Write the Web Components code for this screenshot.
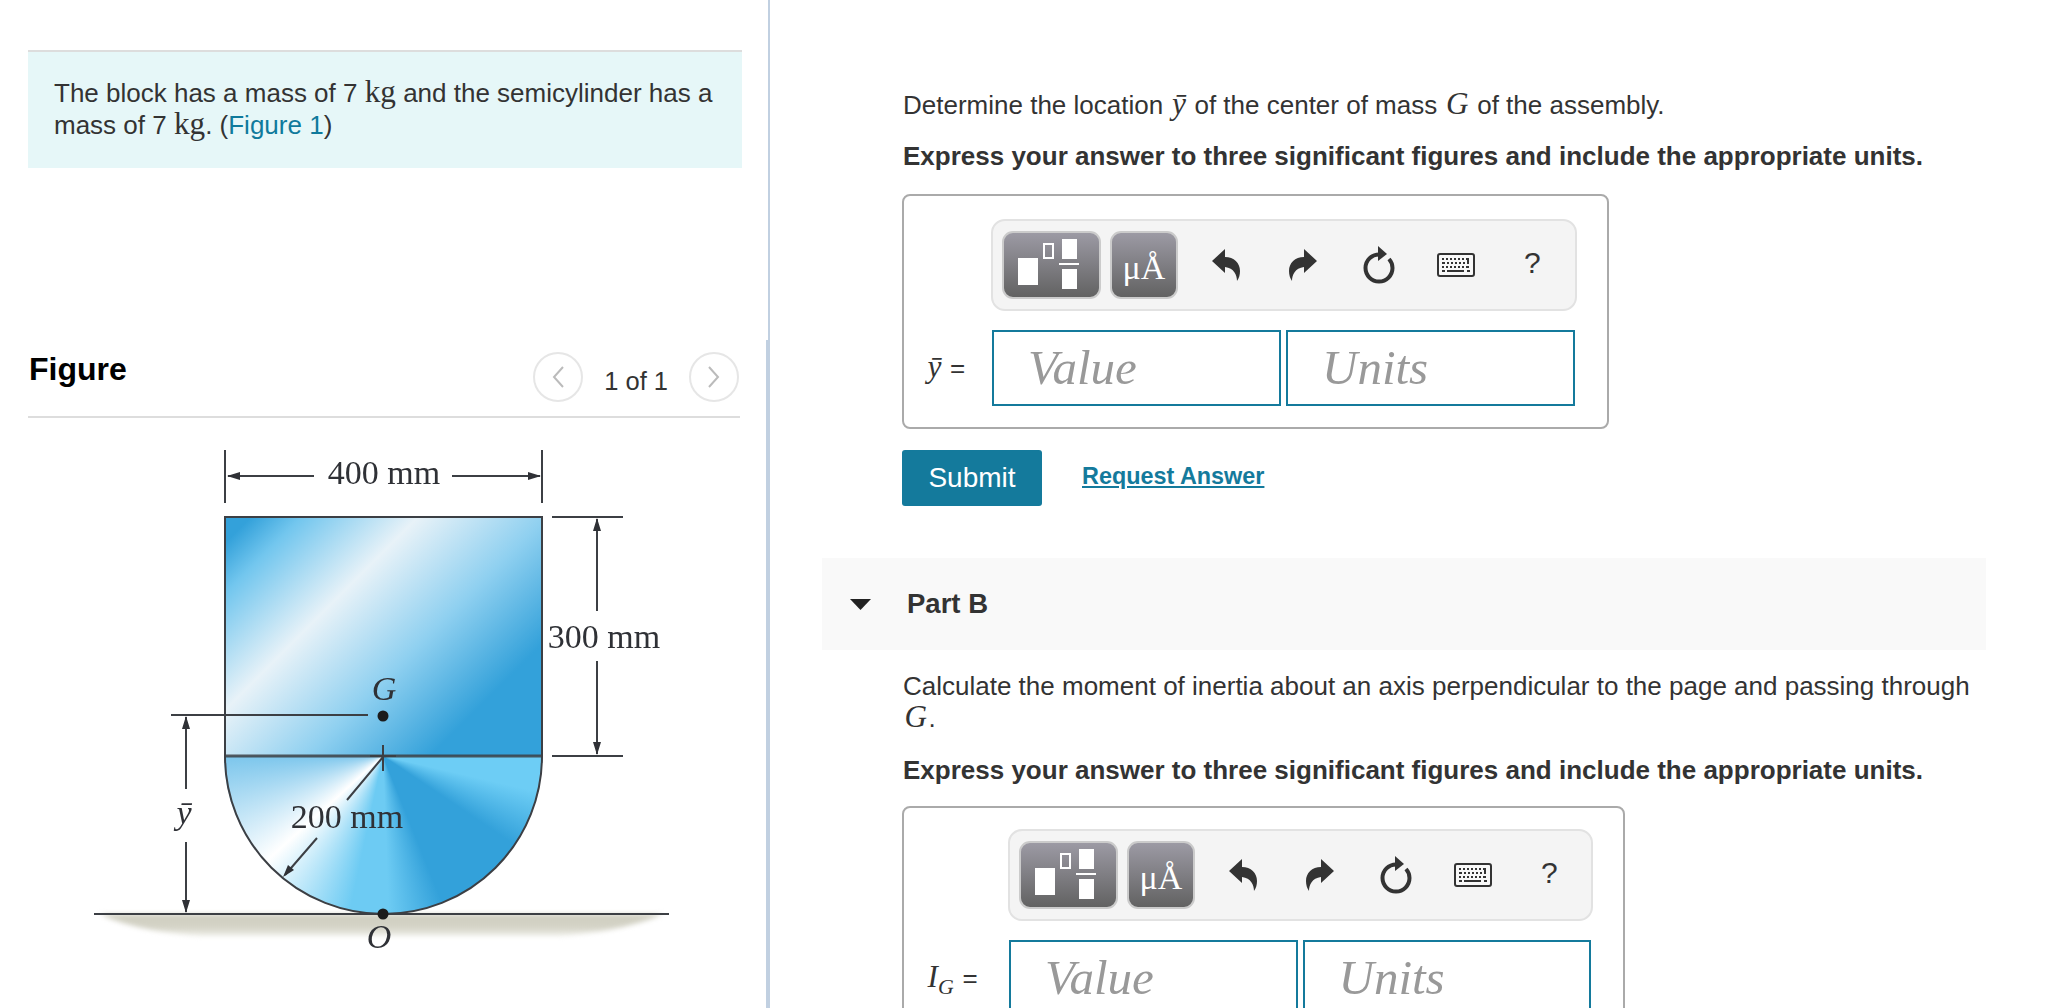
<!DOCTYPE html>
<html lang="en">
<head>
<meta charset="utf-8">
<title>Part A</title>
<style>
  html, body { margin: 0; height: 100%; overflow: hidden; background: #fff; }
  body { font-family: "Liberation Sans", Arial, sans-serif; color: #333; }
</style>
</head>
<body>
<problem-page>
  <div slot="left">
    <info-box>The block has a mass of 7 <math-text upright>kg</math-text> and the semicylinder has a<br>mass of 7 <math-text upright>kg</math-text>. (<a-link>Figure 1</a-link>)</info-box>
    <figure-head></figure-head>
    <block-figure></block-figure>
  </div>
  <div slot="right">
    <prompt-text style="margin-top:89px">Determine the location <math-text>ȳ</math-text> of the center of mass <math-text>G</math-text> of the assembly.</prompt-text>
    <prompt-text strong style="margin-top:19px">Express your answer to three significant figures and include the appropriate units.</prompt-text>
    <answer-box style="margin-top:22px;width:707px;--label-w:66px"><math-text>ȳ</math-text> =</answer-box>
    <submit-row></submit-row>
    <part-header>Part B</part-header>
    <prompt-text style="margin-top:20px">Calculate the moment of inertia about an axis perpendicular to the page and passing through <math-text>G</math-text>.</prompt-text>
    <prompt-text strong style="margin-top:20px">Express your answer to three significant figures and include the appropriate units.</prompt-text>
    <answer-box style="margin-top:20px;width:723px;--label-w:83px;--pad-top:21px"><math-text>I<sub style="font-size:.7em">G</sub></math-text> =</answer-box>
  </div>
</problem-page>

<script>
class ProblemPage extends HTMLElement {
    constructor() {
        super();
        const shadow = this.attachShadow({ mode: 'open' });
        shadow.innerHTML = `
            <style>
                :host { display: flex; height: 100vh; overflow: hidden; }
                .left {
                    position: relative;
                    box-sizing: border-box;
                    width: 770px;
                    flex: none;
                    border-right: 2px solid #c1d0e1;
                    padding: 50px 0 0 28px;
                }
                /* thicker part of the splitter */
                .left::after {
                    content: '';
                    position: absolute;
                    top: 340px;
                    bottom: 0;
                    right: 0;
                    width: 2px;
                    background: #c1d0e1;
                }
                .right { flex: 1; min-width: 0; padding: 0 82px 0 52px; }
            </style>
            <div class="left"><slot name="left"></slot></div>
            <div class="right"><slot name="right"></slot></div>
        `;
    }
}

class MathText extends HTMLElement {
    constructor() {
        super();
        const shadow = this.attachShadow({ mode: 'open' });
        // no whitespace around the slot, it would show up inside the sentence
        shadow.innerHTML = `<style>
                :host {
                    display: inline;
                    font-family: "Liberation Serif", serif;
                    font-size: 1.2em;
                    font-style: italic;
                    line-height: 0;
                    margin: 0 1.500px;
                }
                :host([upright]) { font-style: normal; margin: 0; }
            </style><slot></slot>`;
    }
}

class ALink extends HTMLElement {
    constructor() {
        super();
        const shadow = this.attachShadow({ mode: 'open' });
        shadow.innerHTML = `<style>:host { display: inline; color: #0f7a9c; cursor: pointer; }</style><slot></slot>`;
    }
}

class InfoBox extends HTMLElement {
    constructor() {
        super();
        const shadow = this.attachShadow({ mode: 'open' });
        shadow.innerHTML = `
            <style>
                :host {
                    display: block;
                    box-sizing: border-box;
                    width: 714px;
                    height: 118px;
                    background: #e6f7f8;
                    border-top: 2px solid #ddd;
                    padding: 25px 26px 0;
                    font-size: 26px;
                    line-height: 32px;
                    color: #333;
                }
            </style>
            <slot></slot>
        `;
    }
}

class FigureHead extends HTMLElement {
    constructor() {
        super();
        const shadow = this.attachShadow({ mode: 'open' });
        shadow.innerHTML = `
            <style>
                :host {
                    display: flex;
                    justify-content: space-between;
                    box-sizing: border-box;
                    width: 712px;
                    height: 66px;
                    margin-top: 184px;
                    border-bottom: 2px solid #ddd;
                }
                h2 { margin: 0 0 0 1px; font-size: 32px; line-height: 34px; font-weight: 700; color: #000; }
                .pager { display: flex; align-items: flex-start; gap: 21px; margin-right: 1px; }
                .count { font-size: 25.500px; line-height: 32px; margin-top: 13px; color: #333; }
                .nav {
                    box-sizing: border-box;
                    width: 50px;
                    height: 50px;
                    border: 2px solid #e6e6e6;
                    border-radius: 50%;
                    display: flex;
                    align-items: center;
                    justify-content: center;
                }
            </style>
            <h2>Figure</h2>
            <div class="pager">
                <div class="nav"><svg width="14" height="22" viewBox="0 0 14 22"><path d="M12 1 3 11l9 10" fill="none" stroke="#bbb" stroke-width="2"/></svg></div>
                <div class="count">1 of 1</div>
                <div class="nav"><svg width="14" height="22" viewBox="0 0 14 22"><path d="M2 1l9 10-9 10" fill="none" stroke="#bbb" stroke-width="2"/></svg></div>
            </div>
        `;
    }
}

class BlockFigure extends HTMLElement {
    constructor() {
        super();
        const shadow = this.attachShadow({ mode: 'open' });
        // viewBox uses page coordinates, the left pane starts at 28px
        shadow.innerHTML = `
            <style>
                :host { display: block; margin-left: -28px; width: 740px; height: 590px; }
                svg { display: block; filter: blur(.45px); }
                text { font-family: "Liberation Serif", serif; font-size: 34px; fill: #2f3136; }
                .it { font-style: italic; }
                .l { stroke: #3c3f44; stroke-width: 2; fill: none; }
                .floor { filter: blur(2.500px); }
                .conic {
                    width: 100%;
                    height: 100%;
                    background: conic-gradient(from 0deg at 159px 0,
                        #6dcdf5 90deg, #6dcdf5 103deg, #33a1da 124deg, #33a1da 158deg,
                        #6dcbf3 178deg, #6dcbf3 192deg, #fff 228deg, #7cc6ec 270deg);
                }
            </style>
            <svg width="740" height="590" viewBox="0 418 740 590">
                <defs>
                    <linearGradient id="plate" gradientUnits="userSpaceOnUse" x1="224" y1="516" x2="503" y2="795">
                        <stop offset=".05" stop-color="#33a1da"/>
                        <stop offset=".14" stop-color="#72c6ee"/>
                        <stop offset=".35" stop-color="#e8f2f8"/>
                        <stop offset=".58" stop-color="#8fd0f0"/>
                        <stop offset=".8" stop-color="#33a1da"/>
                        <stop offset="1" stop-color="#33a1da"/>
                    </linearGradient>
                    <linearGradient id="floor" x1="0" y1="0" x2="0" y2="1">
                        <stop offset="0" stop-color="#cfcec0"/>
                        <stop offset=".6" stop-color="#d4d3c6"/>
                        <stop offset="1" stop-color="#f0f0ea"/>
                    </linearGradient>
                    <clipPath id="half"><path d="M224 756H542A159 158 0 0 1 224 756Z"/></clipPath>
                </defs>

                <path class="floor" d="M100 914H663C640 924 610 932 560 936H200C150 932 120 924 100 914Z" fill="url(#floor)"/>

                <rect x="225" y="517" width="317" height="239" fill="url(#plate)"/>
                <g clip-path="url(#half)">
                    <foreignObject x="224" y="756" width="318" height="159">
                        <div xmlns="http://www.w3.org/1999/xhtml" class="conic"></div>
                    </foreignObject>
                </g>
                <path class="l" d="M225 756V517H542V756A158.500 158 0 0 1 225 756"/>
                <path d="M224 756H542" stroke="#3c3f44" stroke-width="3" fill="none" opacity=".85"/>

                <path class="l" d="M94 914H669"/>

                <!-- 400 mm -->
                <path class="l" d="M225 450V503M542 450V503M228 476H314M452 476H540"/>
                <path d="M227 476l13-4v8zM541 476l-13-4v8z" fill="#2f3136"/>
                <text x="384" y="484" text-anchor="middle">400 mm</text>

                <!-- 300 mm -->
                <path class="l" d="M552 517H623M552 756H623M597 519V611M597 661V754"/>
                <path d="M597 518l-4 13h8zM597 755l-4-13h8z" fill="#2f3136"/>
                <text x="604" y="648" text-anchor="middle">300 mm</text>

                <!-- y bar -->
                <path class="l" d="M171 715H368M186 717V789M186 842V912"/>
                <path d="M186 716l-4 13h8zM186 913l-4-13h8z" fill="#2f3136"/>
                <text x="184" y="824" text-anchor="middle" class="it">ȳ</text>

                <!-- G, centre lines -->
                <circle cx="383" cy="716" r="5.500" fill="#1c1c1c"/>
                <text x="384" y="700" text-anchor="middle" class="it">G</text>
                <path class="l" d="M383 745V771M370 756H396"/>
                <path class="l" d="M383 757 347 800M317 838 285 875"/>
                <path d="M283 877l5-12 6 5z" fill="#2f3136"/>
                <text x="347" y="828" text-anchor="middle">200 mm</text>

                <!-- O -->
                <circle cx="383" cy="914" r="5.500" fill="#1c1c1c"/>
                <text x="379" y="948" text-anchor="middle" class="it">O</text>
            </svg>
        `;
    }
}

class PromptText extends HTMLElement {
    constructor() {
        super();
        const shadow = this.attachShadow({ mode: 'open' });
        shadow.innerHTML = `
            <style>
                :host {
                    display: block;
                    padding-left: 81px;
                    font-size: 26px;
                    line-height: 32px;
                    color: #333;
                }
                :host([strong]) { font-weight: 700; }
            </style>
            <slot></slot>
        `;
    }
}

class ToolBar extends HTMLElement {
    constructor() {
        super();
        const shadow = this.attachShadow({ mode: 'open' });
        shadow.innerHTML = `
            <style>
                :host {
                    display: flex;
                    align-items: center;
                    box-sizing: border-box;
                    height: 92px;
                    border: 2px solid #e2e2e2;
                    border-radius: 14px;
                    background: #f4f4f4;
                    padding: 0 0 0 9px;
                    margin-left: -1px;
                }
                .btn {
                    box-sizing: border-box;
                    height: 68px;
                    border: 2px solid #cbcbcb;
                    border-radius: 11px;
                    background: linear-gradient(#9c9aa4, #626262);
                    flex: none;
                }
                .tpl { width: 99px; display: block; }
                .unit {
                    width: 68px;
                    margin-left: 9px;
                    color: #fff;
                    font-family: "Liberation Serif", serif;
                    font-size: 34px;
                    line-height: 70px;
                    text-align: center;
                    overflow: hidden;
                }
                .cells { display: flex; margin-left: 10px; }
                .cell {
                    width: 76.500px;
                    height: 68px;
                    display: flex;
                    align-items: center;
                    justify-content: center;
                }
                .help { font-size: 30px; color: #333; margin-top: -2px; }
            </style>
            <div class="btn tpl">
                <svg width="95" height="64" viewBox="0 0 95 64">
                    <rect x="14" y="25" width="20" height="27" fill="#fff"/>
                    <rect x="40" y="11" width="9" height="14" fill="none" stroke="#fff" stroke-width="2"/>
                    <rect x="58" y="6" width="15" height="20" fill="#fff"/>
                    <rect x="55" y="30" width="20" height="2" fill="#fff"/>
                    <rect x="58" y="36" width="15" height="20" fill="#fff"/>
                </svg>
            </div>
            <div class="btn unit">μÅ</div>
            <div class="cells">
                <div class="cell"><svg width="28" height="32" viewBox="0 0 28 32"><path d="M0 12 13 0V8C22 8 28 14 28 22 28 26 27 29 25 32 25 26 22 19 13 18V24Z" fill="#333"/></svg></div>
                <div class="cell"><svg width="28" height="32" viewBox="0 0 28 32"><path d="M28 12 15 0V8C6 8 0 14 0 22 0 26 1 29 3 32 3 26 6 19 15 18V24Z" fill="#333"/></svg></div>
                <div class="cell"><svg width="32" height="38" viewBox="0 0 32 38"><path d="M16 8.500A13.500 13.500 0 1 0 29.500 22 13.500 13.500 0 0 0 26 13" fill="none" stroke="#333" stroke-width="4"/><path d="M15 0 24 8 15 15Z" fill="#333"/></svg></div>
                <div class="cell"><svg width="38" height="24" viewBox="0 0 38 24">
                    <rect x="1" y="1" width="36" height="22" rx="2" fill="#f8f8f8" stroke="#333" stroke-width="2"/>
                    <path d="M5 6h2M9 6h2M13 6h2M17 6h2M21 6h2M25 6h2M29 6h3M5 10h3M10 10h2M14 10h2M18 10h2M22 10h2M26 10h2M31 6v5M5 14h2M9 14h2M13 14h2M17 14h2M21 14h2M25 14h2M29 14h3M5 18h3M10 18h17M30 18h3" stroke="#333" stroke-width="2" fill="none"/>
                </svg></div>
                <div class="cell help">?</div>
            </div>
        `;
    }
}

class InputField extends HTMLElement {
    constructor() {
        super();
        const shadow = this.attachShadow({ mode: 'open' });
        shadow.innerHTML = `
            <style>
                :host {
                    display: block;
                    flex: 1;
                    box-sizing: border-box;
                    height: 76px;
                    border: 2px solid #147a9c;
                    padding-left: 34px;
                    font-family: "Liberation Serif", serif;
                    font-style: italic;
                    font-size: 49px;
                    line-height: 71px;
                    color: #999;
                }
            </style>
            <slot></slot>
        `;
    }
}

class AnswerBox extends HTMLElement {
    constructor() {
        super();
        const shadow = this.attachShadow({ mode: 'open' });
        shadow.innerHTML = `
            <style>
                :host {
                    display: block;
                    box-sizing: border-box;
                    margin-left: 80px;
                    border: 2px solid #aaa;
                    border-radius: 8px;
                    padding: var(--pad-top, 23px) 30px 21px 22px;
                }
                .grid {
                    display: grid;
                    grid-template-columns: var(--label-w) minmax(0, 1fr);
                    row-gap: 19px;
                    align-items: center;
                }
                .label { font-size: 26px; color: #333; white-space: nowrap; }
                .inputs { display: flex; gap: 5px; margin-right: 2px; }
                tool-bar { grid-column: 2; }
            </style>
            <div class="grid">
                <tool-bar></tool-bar>
                <div class="label"><slot></slot></div>
                <div class="inputs">
                    <input-field>Value</input-field>
                    <input-field>Units</input-field>
                </div>
            </div>
        `;
    }
}

class SubmitRow extends HTMLElement {
    constructor() {
        super();
        const shadow = this.attachShadow({ mode: 'open' });
        shadow.innerHTML = `
            <style>
                :host {
                    display: flex;
                    align-items: center;
                    gap: 40px;
                    margin: 21px 0 0 80px;
                }
                .submit {
                    box-sizing: border-box;
                    width: 140px;
                    height: 56px;
                    border-radius: 3px;
                    background: #147a9c;
                    color: #fff;
                    font-size: 28px;
                    line-height: 56px;
                    text-align: center;
                }
                .req {
                    color: #147a9c;
                    font-size: 23.400px;
                    font-weight: 700;
                    text-decoration: underline;
                    margin-top: -4px;
                }
            </style>
            <div class="submit">Submit</div>
            <div class="req">Request Answer</div>
        `;
    }
}

class PartHeader extends HTMLElement {
    constructor() {
        super();
        const shadow = this.attachShadow({ mode: 'open' });
        shadow.innerHTML = `
            <style>
                :host {
                    display: flex;
                    align-items: center;
                    box-sizing: border-box;
                    height: 92px;
                    margin-top: 52px;
                    padding: 0 0 0 28px;
                    background: #f9f9f9;
                    font-size: 27.500px;
                    font-weight: 700;
                    color: #333;
                }
                svg { margin-right: 36px; flex: none; }
            </style>
            <svg width="21" height="11" viewBox="0 0 21 11"><path d="M0 0H21L10.500 11Z" fill="#222"/></svg>
            <span><slot></slot></span>
        `;
    }
}

customElements.define('problem-page', ProblemPage);
customElements.define('math-text', MathText);
customElements.define('a-link', ALink);
customElements.define('info-box', InfoBox);
customElements.define('figure-head', FigureHead);
customElements.define('block-figure', BlockFigure);
customElements.define('prompt-text', PromptText);
customElements.define('tool-bar', ToolBar);
customElements.define('input-field', InputField);
customElements.define('answer-box', AnswerBox);
customElements.define('submit-row', SubmitRow);
customElements.define('part-header', PartHeader);
</script>
</body>
</html>
